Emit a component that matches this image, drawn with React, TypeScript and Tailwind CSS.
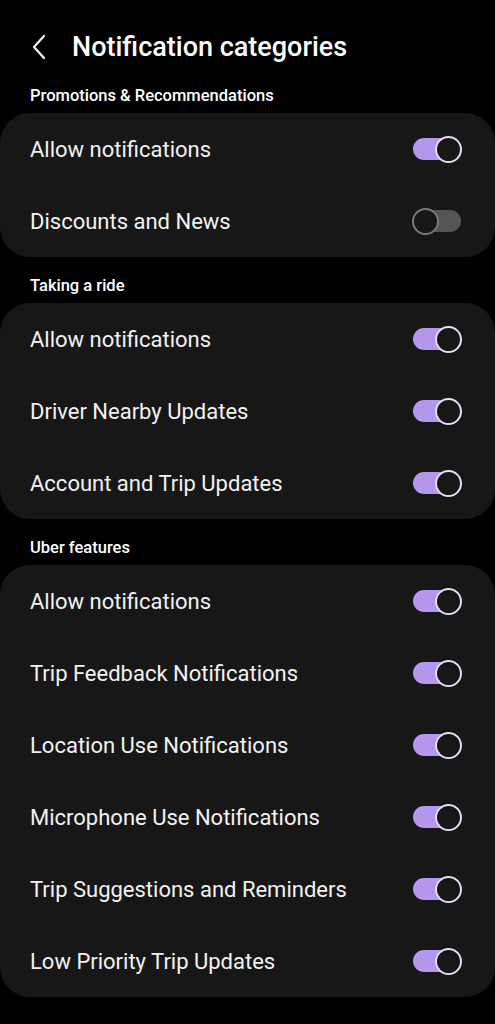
import React, { useState } from 'react';

interface Section {
  title: string;
  items: { label: string; on: boolean }[];
}

const SECTIONS: Section[] = [
  {
    title: 'Promotions & Recommendations',
    items: [
      { label: 'Allow notifications', on: true },
      { label: 'Discounts and News', on: false },
    ],
  },
  {
    title: 'Taking a ride',
    items: [
      { label: 'Allow notifications', on: true },
      { label: 'Driver Nearby Updates', on: true },
      { label: 'Account and Trip Updates', on: true },
    ],
  },
  {
    title: 'Uber features',
    items: [
      { label: 'Allow notifications', on: true },
      { label: 'Trip Feedback Notifications', on: true },
      { label: 'Location Use Notifications', on: true },
      { label: 'Microphone Use Notifications', on: true },
      { label: 'Trip Suggestions and Reminders', on: true },
      { label: 'Low Priority Trip Updates', on: true },
    ],
  },
];

const Toggle: React.FC<{ on: boolean; onChange: () => void }> = ({ on, onChange }) => (
  <button
    onClick={onChange}
    className={`relative w-[48px] h-[22px] rounded-full flex items-center ${on ? 'bg-[#b497ec] justify-end' : 'bg-[#555555] justify-start'}`}
  >
    <span
      className={`w-[27px] h-[27px] rounded-full bg-[#171717] border-2 ${on ? 'border-[#e6dcf8] -mr-[1px]' : 'border-[#7a7a7a] -ml-[1px]'}`}
    />
  </button>
);

export default function App() {
  const [state, setState] = useState(SECTIONS.map(s => s.items.map(i => i.on)));

  const flip = (si: number, ii: number) => {
    setState(prev => prev.map((row, r) => (r === si ? row.map((v, c) => (c === ii ? !v : v)) : row)));
  };

  return (
    <div className="w-full min-h-screen bg-black text-[#f2f2f2]" style={{ fontFamily: 'Roboto, "Noto Sans", sans-serif' }}>
      {/* header */}
      <header className="h-[76px] flex items-center pt-[18px] pl-[30px]">
        <svg width="18" height="28" viewBox="0 0 18 28" fill="none" className="mr-[24px]">
          <path d="M14 3 L4 14 L14 25" stroke="#f2f2f2" strokeWidth="2.2" strokeLinecap="round" strokeLinejoin="round" />
        </svg>
        <h1 className="text-[27px] font-medium text-white">Notification categories</h1>
      </header>

      {SECTIONS.map((section, si) => (
        <section key={section.title}>
          <h2 className="h-[37px] flex items-center pl-[30px] text-[16.5px] font-medium text-white pt-[4px]">
            {section.title}
          </h2>
          <div className="bg-[#171717] rounded-[30px] mb-[9px]">
            {section.items.map((item, ii) => (
              <div key={item.label + ii} className="h-[72px] flex items-center justify-between pl-[30px] pr-[34px]">
                <span className="text-[22px]">{item.label}</span>
                <Toggle on={state[si][ii]} onChange={() => flip(si, ii)} />
              </div>
            ))}
          </div>
        </section>
      ))}
    </div>
  );
}
